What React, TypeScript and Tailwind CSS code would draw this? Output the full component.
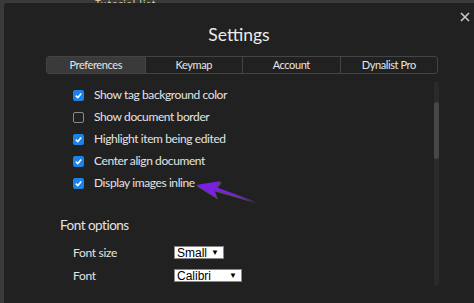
import { FunctionComponent } from "react";

const tabs = ["Preferences", "Keymap", "Account", "Dynalist Pro"];

const options = [
  { label: "Show tag background color", checked: true },
  { label: "Show document border", checked: false },
  { label: "Highlight item being edited", checked: true },
  { label: "Center align document", checked: true },
  { label: "Display images inline", checked: true },
];

const Check: FunctionComponent<{ checked: boolean }> = ({ checked }) =>
  checked ? (
    <span className="w-[11px] h-[11px] rounded-[2px] bg-[#1a82e8] flex items-center justify-center">
      <svg width="9" height="9" viewBox="0 0 10 10">
        <path d="M2 5.2 L4.2 7.3 L8 2.8" stroke="#fff" strokeWidth="1.8" fill="none" />
      </svg>
    </span>
  ) : (
    <span className="w-[11px] h-[11px] rounded-[2px] border border-[#8a8a8a]" />
  );

const Select: FunctionComponent<{ value: string; width: string }> = ({ value, width }) => (
  <div
    className={`${width} h-[13px] bg-white border border-[#888] flex items-center justify-between pl-[2px] pr-[4px] text-[12px] leading-none text-black font-['Liberation_Sans',sans-serif]`}
  >
    <span>{value}</span>
    <span className="text-[8px]">▼</span>
  </div>
);

export default function App() {
  return (
    <div className="w-[474px] h-[303px] bg-[#3a3a3c] overflow-hidden relative font-['Lato',sans-serif]">
      <div className="absolute left-[95px] top-[-4px] text-[10px] text-[#d8d6a8] tracking-[1px]">
        Tutorial list
      </div>
      <div className="absolute left-[4px] top-[3px] w-[470px] h-[300px] bg-[#212121] rounded-tl-[3px] flex flex-col">
        <div className="relative h-[53px] flex items-end justify-center pb-[8px]">
          <span className="text-[17.5px] text-[#ececec]">Settings</span>
          <span className="absolute right-[4px] top-[9px]">
            <svg width="10" height="10" viewBox="0 0 10 10">
              <path d="M1 1 L9 9 M9 1 L1 9" stroke="#c8c8c8" strokeWidth="1.6" />
            </svg>
          </span>
        </div>
        <div className="ml-[42px] w-[392px] h-[18px] border border-[#444] rounded-[3px] grid grid-cols-4 overflow-hidden">
          {tabs.map((t, i) => (
            <div
              key={t}
              className={`flex items-center justify-center text-[11px] tracking-[-0.4px] text-[#e6e6e6] ${
                i === 0 ? "bg-[#3a3a3a]" : ""
              } ${i > 0 ? "border-l border-[#444]" : ""}`}
            >
              {t}
            </div>
          ))}
        </div>
        <div className="flex">
          <div className="flex-1">
            <div className="pl-[69px] pt-[13px] flex flex-col gap-[6px]">
              {options.map((o) => (
                <div key={o.label} className="flex items-center h-[16px] gap-[10px]">
                  <Check checked={o.checked} />
                  <span className="text-[12px] tracking-[-0.4px] text-[#e4e4e4]">{o.label}</span>
                </div>
              ))}
            </div>
            <div className="pl-[56px] pt-[24px] text-[13.5px] tracking-[-0.5px] text-[#e4e4e4]">
              Font options
            </div>
            <div className="pl-[69px] pt-[11px] flex flex-col gap-[10px]">
              <div className="flex items-center h-[13px]">
                <span className="w-[101px] text-[12px] tracking-[-0.3px] text-[#e4e4e4]">Font size</span>
                <Select value="Small" width="w-[50px]" />
              </div>
              <div className="flex items-center h-[13px]">
                <span className="w-[101px] text-[12px] tracking-[-0.3px] text-[#e4e4e4]">Font</span>
                <Select value="Calibri" width="w-[68px]" />
              </div>
            </div>
          </div>
          <div className="w-[5px] mr-[35px] mt-[7px] h-[205px] bg-[#2a2a2a] rounded-full">
            <div className="mt-[21px] h-[57px] bg-[#474747] rounded-full" />
          </div>
        </div>
      </div>
      <svg
        className="absolute left-0 top-0"
        width="474"
        height="303"
        viewBox="0 0 474 303"
      >
        <g transform="translate(1,1.5)" opacity="0.55">
          <path d="M256 202 L214 190 L217 198 L196 185 L221 181 L216 187 Z" fill="#777" />
        </g>
        <path d="M256 202 L214 190 L217 198 L196 185 L221 181 L216 187 Z" fill="#7a1fe6" />
      </svg>
    </div>
  );
}
